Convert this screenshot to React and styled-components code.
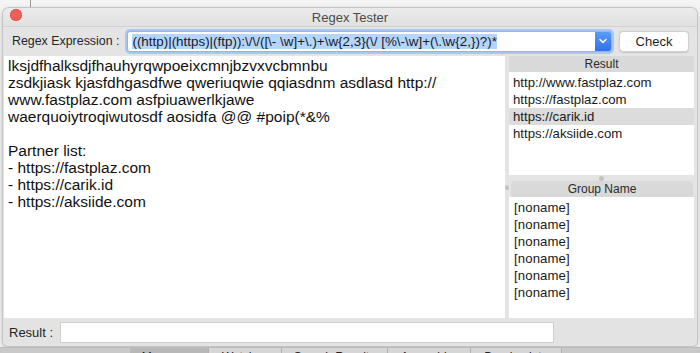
import React from 'react'
import styled, { createGlobalStyle } from 'styled-components'

const GlobalStyle = createGlobalStyle`
  html, body {
    margin: 0;
    padding: 0;
    background: #f3f3f3;
  }
  body {
    font-family: "Liberation Sans", Arial, sans-serif;
    color: #1e1e1e;
  }
`

const Desktop = styled.div`
  width: 700px;
  height: 353px;
  overflow: hidden;
  display: flex;
  flex-direction: column;
  background:
    linear-gradient(to right, transparent 30px, #9a9a9a 30px, #9a9a9a 31px, transparent 31px) top / 100% 8px no-repeat,
    #f4f4f4;
`

const TopStrip = styled.div`
  height: 8px;
  flex: none;
`

const Window = styled.div`
  margin: 0 3px;
  height: 338px;
  flex: none;
  display: flex;
  flex-direction: column;
  background: #e3e3e3;
  border-radius: 6px 6px 5px 5px;
  box-shadow: 0 0 0 1px #c4c4c4, 0 2px 6px rgba(0, 0, 0, 0.25);
  overflow: hidden;
`

const TitleBar = styled.div`
  height: 18px;
  display: flex;
  align-items: center;
  justify-content: center;
  position: relative;
  background: linear-gradient(#ebebeb, #e1e1e1);
  border-bottom: 1px solid #d2d2d2;
  font-size: 13px;
  color: #4a4a4a;
`

const CloseDot = styled.span`
  position: absolute;
  left: 7px;
  top: 1px;
  width: 12px;
  height: 12px;
  border-radius: 50%;
  background: #ee5f57;
  box-shadow: inset 0 0 0 0.5px #d9473f;
`

const Toolbar = styled.div`
  height: 28px;
  display: flex;
  align-items: center;
  padding: 0 8px 0 9px;
  background: #e4e4e4;
`

const Label = styled.span`
  font-size: ${p => p.size || 13}px;
  color: #262626;
  margin-right: ${p => p.gap || 8}px;
  white-space: nowrap;
`

const Combo = styled.div`
  flex: 1;
  height: 19px;
  display: flex;
  align-items: center;
  background: #fff;
  border: 1px solid #8fb4ee;
  border-radius: 3px;
  box-shadow: 0 0 0 2px #a9c7f5;
  overflow: hidden;
`

const ComboText = styled.div`
  flex: 1;
  padding-left: 4px;
  font-size: 13.4px;
  white-space: nowrap;
  overflow: hidden;
`

const Selected = styled.span`
  background: #b4d5fe;
  color: #1a1a1a;
`

const DropButton = styled.div`
  width: 16px;
  height: 100%;
  display: flex;
  align-items: center;
  justify-content: center;
  background: linear-gradient(#5a9bf7, #2f72e8);
`

const CheckButton = styled.button`
  margin-left: 7px;
  width: 70px;
  height: 21px;
  background: #fff;
  border: 1px solid #d0d0d0;
  border-radius: 4px;
  font-family: inherit;
  font-size: 13px;
  color: #1e1e1e;
  padding: 0;
  box-shadow: 0 0.5px 1px rgba(0, 0, 0, 0.12);
`

const Body = styled.div`
  flex: 1;
  display: flex;
  padding: 1px 3px 0 1px;
  background: #e4e4e4;
`

const Editor = styled.div`
  width: 501px;
  background: #fff;
  padding: 1px 4px;
  box-sizing: border-box;
  font-size: 15.5px;
  line-height: 17px;
  color: #111;
  white-space: pre-wrap;
`

const Splitter = styled.div`
  width: 4px;
  display: flex;
  align-items: center;
  justify-content: center;
`

const Knob = styled.span`
  width: 5px;
  height: 5px;
  border-radius: 50%;
  background: #c2c2c2;
`

const Side = styled.div`
  flex: 1;
  display: flex;
  flex-direction: column;
`

const Pane = styled.div`
  display: flex;
  flex-direction: column;
  height: ${p => p.h}px;
  flex: ${p => (p.h ? 'none' : 1)};
`

const Header = styled.div`
  height: 16px;
  display: flex;
  align-items: center;
  justify-content: center;
  font-size: 12px;
  color: #2a2a2a;
  background: #d9d9d9;
  border-radius: ${p => (p.round ? '4px 4px 0 0' : '0')};
  margin: ${p => (p.round ? '0 1px 0 2px' : '0')};
`

const List = styled.div`
  flex: 1;
  background: #fff;
  padding-top: 2px;
  padding-left: ${p => p.indent || 0}px;
`

const Row = styled.div`
  height: 17px;
  line-height: 17px;
  padding-left: 4px;
  font-size: 13.2px;
  color: #1a1a1a;
  background: ${p => (p.active ? '#dcdcdc' : 'transparent')};
  letter-spacing: ${p => (p.tight ? '0.1px' : '0')};
`

const HSplit = styled.div`
  height: 6px;
  display: flex;
  align-items: center;
  justify-content: center;
`

const Footer = styled.div`
  height: 28px;
  display: flex;
  align-items: center;
  padding: 0 6px;
  background: #e3e3e3;
`

const ResultInput = styled.div`
  width: 492px;
  height: 19px;
  background: #fff;
  border: 1px solid #cfcfcf;
`

const TabBar = styled.div`
  flex: 1;
  display: flex;
  padding-left: 130px;
  margin-top: 1px;
  background: #c9c9c9;
  border-top: 1px solid #b9b9b9;
  overflow: hidden;
`

const Tab = styled.div`
  width: ${p => p.w}px;
  padding-top: 2px;
  text-align: center;
  font-size: 12px;
  line-height: 14px;
  color: #222;
  border-right: 1px solid #b0b0b0;
  background: ${p => (p.active ? '#b8b8b8' : '#d6d6d6')};
`

const Chevron = () => (
  <svg width="8" height="6" viewBox="0 0 8 6">
    <path d="M1 1.5 L4 4.5 L7 1.5" fill="none" stroke="#fff" strokeWidth="1.5" strokeLinecap="round" strokeLinejoin="round" />
  </svg>
)

const editorText = `lksjdfhalksdjfhauhyrqwpoeixcmnjbzvxvcbmnbu
zsdkjiask kjasfdhgasdfwe qweriuqwie qqiasdnm asdlasd http://
www.fastplaz.com asfpiuawerlkjawe
waerquoiytroqiwutosdf aosidfa @@ #poip(*&%

Partner list:
- https://fastplaz.com
- https://carik.id
- https://aksiide.com`

const results = [
  'http://www.fastplaz.com',
  'https://fastplaz.com',
  'https://carik.id',
  'https://aksiide.com',
]

const groups = Array.from({ length: 6 }, () => '[noname]')

const tabs = [
  { label: 'Messages', w: 78, active: true },
  { label: 'Watches', w: 72 },
  { label: 'Search Results', w: 105 },
  { label: 'Assembler', w: 82 },
  { label: 'Breakpoints', w: 90 },
]

export default function App() {
  return (
    <Desktop>
      <GlobalStyle />
      <TopStrip />
      <Window>
        <TitleBar>
          <CloseDot />
          Regex Tester
        </TitleBar>
        <Toolbar>
          <Label size={12.4} gap={8}>Regex Expression :</Label>
          <Combo>
            <ComboText>
              <Selected>{'((http)|(https)|(ftp)):\\/\\/([\\- \\w]+\\.)+\\w{2,3}(\\/ [%\\-\\w]+(\\.\\w{2,})?)*'}</Selected>
            </ComboText>
            <DropButton>
              <Chevron />
            </DropButton>
          </Combo>
          <CheckButton>Check</CheckButton>
        </Toolbar>
        <Body>
          <Editor>{editorText}</Editor>
          <Splitter>
            <Knob />
          </Splitter>
          <Side>
            <Pane h={119}>
              <Header>Result</Header>
              <List>
                {results.map((r, i) => (
                  <Row key={r} active={i === 2}>{r}</Row>
                ))}
              </List>
            </Pane>
            <HSplit>
              <Knob />
            </HSplit>
            <Pane>
              <Header round>Group Name</Header>
              <List indent={1}>
                {groups.map((g, i) => (
                  <Row key={i} tight>{g}</Row>
                ))}
              </List>
            </Pane>
          </Side>
        </Body>
        <Footer>
          <Label gap={7}>Result :</Label>
          <ResultInput />
        </Footer>
      </Window>
      <TabBar>
        {tabs.map(t => (
          <Tab key={t.label} w={t.w} active={t.active}>{t.label}</Tab>
        ))}
      </TabBar>
    </Desktop>
  )
}
